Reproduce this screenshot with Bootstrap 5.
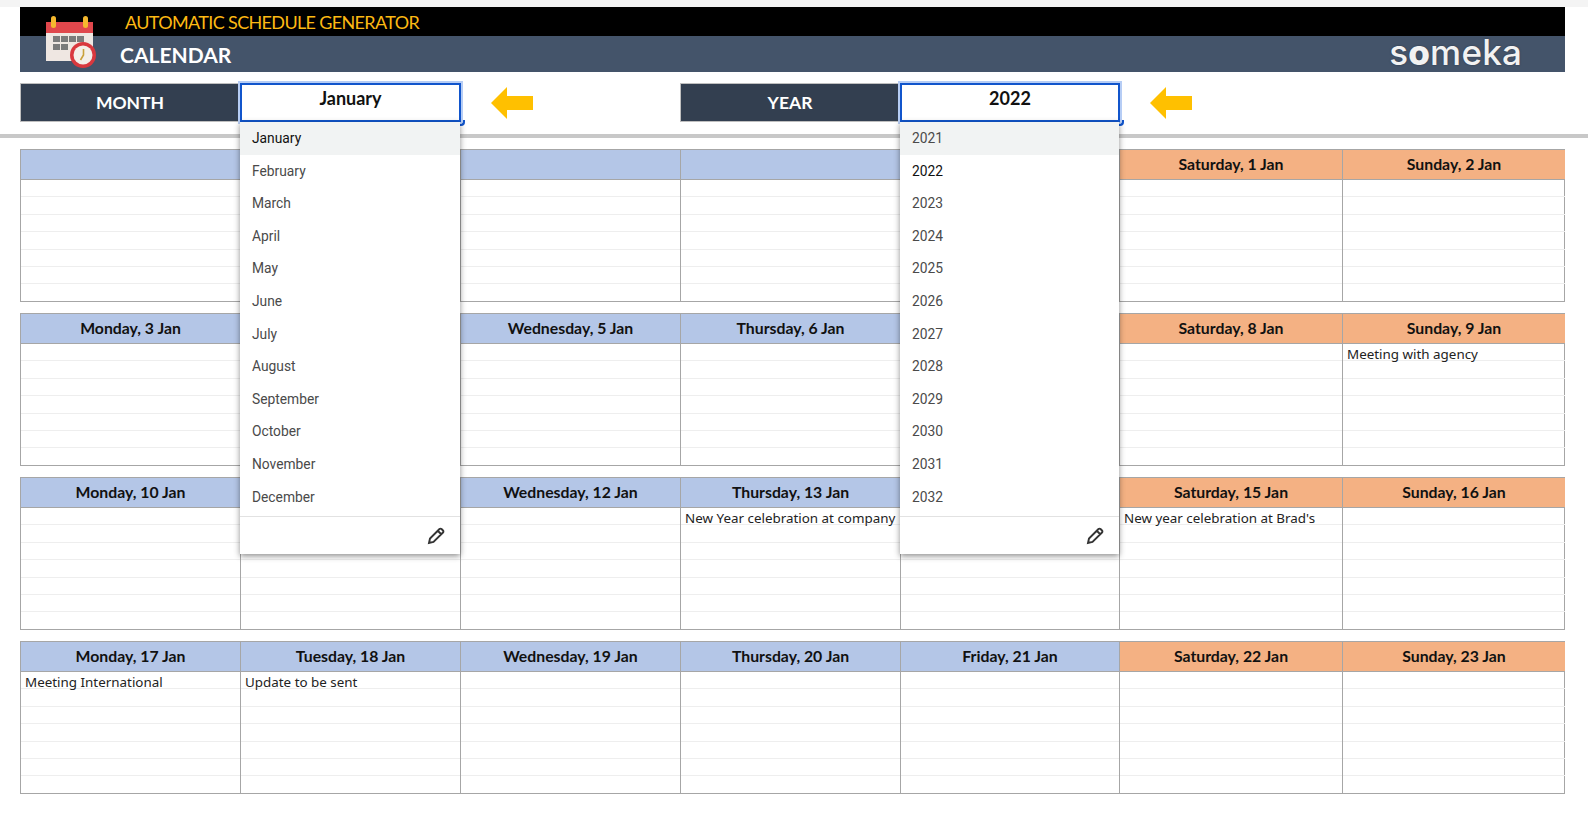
<!DOCTYPE html>
<html lang="en">

<head>
    <meta charset="UTF-8" />
    <title>Calendar</title>
    <link href="https://cdn.jsdelivr.net/npm/bootstrap@5.3.2/dist/css/bootstrap.min.css" rel="stylesheet" />
    <style>
        :root { --grid-cols: 220px 220px 220px 220px 219px 223px 222px; }
        html, body { height: 814px; overflow: hidden; background: #fff; font-family: "Lato", "Liberation Sans", sans-serif; }
        .top-strip { height: 7px; background: #f4f4f4; }
        .page-pad { padding: 0 23px 0 20px; }
        .title-bar { height: 29px; background: #000; padding-left: 105px; color: #fdb913; font-size: 18px; letter-spacing: -.65px; line-height: 31px; }
        .sub-bar { height: 36px; background: #44546a; padding: 0 43px 0 100px; color: #fff; }
        .sub-title { font-size: 21px; font-weight: 700; line-height: 38px; }
        .brand { font-family: "Inter", sans-serif; font-size: 35px; font-weight: 500; line-height: 33px; letter-spacing: .2px; color: #f2f2f2; text-shadow: 0 0 2px #2c3848; }
        .brand b { font-weight: 800; }
        .head-wrap { position: relative; }
        .app-icon { position: absolute; left: 25px; top: 8px; }
        .ctl-grid { display: grid; grid-template-columns: var(--grid-cols); grid-template-rows: 39px; margin-top: 11px; }
        .ctl-label { background: #333f50; color: #fff; font-size: 17.5px; font-weight: 700; line-height: 38px; text-align: center; border: 1px solid #bfbfbf; }
        .ctl-select { position: relative; z-index: 5; }
        .ctl-box { height: 39px; margin-right: -1px; background: #fff; border: 2px solid #1155cc; box-shadow: 0 0 0 2px #b6cdf5; font-size: 18px; font-weight: 700; color: #111; text-align: center; line-height: 27px; }
        .ctl-box::after { content: ""; position: absolute; right: -5px; bottom: -4px; width: 5px; height: 6px; border-right: 2px solid #1155cc; border-bottom: 2px solid #1155cc; border-bottom-right-radius: 4px; }
        .ctl-arrow { padding-left: 31px; padding-top: 4px; }
        .ctl-arrow svg { display: block; }
        .sched-menu.dropdown-menu { display: block; position: absolute; top: 39px; left: 0; width: 100%; min-width: 0; padding: 0; margin: 0; border: 0; border-radius: 0; background: #fff; box-shadow: 0 2px 6px rgba(0, 0, 0, .45); font-family: "Roboto", sans-serif; }
        .sched-menu .dropdown-item { height: 32.6px; padding: 0 12px; font-size: 13.8px; line-height: 32px; color: #4a4a4a; }
        .sched-menu .dropdown-item.hot { background: #f1f3f3; }
        .sched-menu .dropdown-item.cur { color: #111; }
        .menu-foot { height: 38px; margin-top: 3px; border-top: 1px solid #e2e2e2; padding: 10px 15px 0 0; text-align: right; line-height: 1; }
        .divider { height: 4px; margin-top: 12px; background: #c8c8c8; }
        .weeks { margin-top: 11px; }
        .week { display: grid; grid-template-columns: var(--grid-cols); height: 153px; margin-bottom: 11px; border: 1px solid #a6a6a6; }
        .day { border-right: 1px solid #a6a6a6; min-width: 0; }
        .day:last-child { border-right: 0; }
        .day-head { height: 30px; background: #b4c6e7; border-bottom: 1px solid #a6a6a6; color: #111; font-size: 15.8px; font-weight: 700; text-align: center; line-height: 28px; }
        .day.weekend .day-head { background: #f4b183; }
        .day-line { height: 17.4px; border-bottom: 1px solid #eeeeee; padding-left: 4px; font-family: "Noto Sans", sans-serif; font-size: 13.4px; line-height: 21px; color: #222; white-space: nowrap; }
        .day-line:last-child { border-bottom: 0; }
    </style>
</head>

<body>
    <div class="top-strip"></div>
    <div class="page-pad">
        <div class="head-wrap">
            <div class="title-bar">AUTOMATIC SCHEDULE GENERATOR</div>
            <div class="sub-bar d-flex justify-content-between">
                <div class="sub-title">CALENDAR</div>
                <div class="brand">s<b>o</b>meka</div>
            </div>
            <svg class="app-icon" width="54" height="54" viewBox="0 0 54 54">
                <rect x="1" y="7" width="47" height="39" fill="#efe7e2" />
                <rect x="1" y="7" width="47" height="11" fill="#e0474c" />
                <rect x="6" y="1" width="5" height="12" rx="2.5" fill="#f5b82e" />
                <rect x="38" y="1" width="5" height="12" rx="2.5" fill="#f5b82e" />
                <g fill="#7b7b7b">
                    <rect x="8" y="21" width="7" height="6" /><rect x="16" y="21" width="7" height="6" /><rect x="24" y="21" width="7" height="6" /><rect x="32" y="21" width="7" height="6" />
                    <rect x="8" y="29" width="7" height="6" /><rect x="16" y="29" width="7" height="6" />
                </g>
                <circle cx="38" cy="40" r="13" fill="#d9383e" />
                <circle cx="38" cy="40" r="9.500" fill="#f4efe9" />
                <path d="M38.500 34v6l-3 5" fill="none" stroke="#c9a13a" stroke-width="1.600" />
            </svg>
        </div>

        <div class="ctl-grid">
            <div class="ctl-label">MONTH</div>
            <div class="ctl-select">
                <div class="ctl-box">January</div>
                <div class="dropdown-menu sched-menu" id="menu-month"></div>
            </div>
            <div class="ctl-arrow"><svg width="42" height="32" viewBox="0 0 42 32"><path d="M0 16 16 0v9h26v14H16v9z" fill="#ffc000" /></svg></div>
            <div class="ctl-label">YEAR</div>
            <div class="ctl-select">
                <div class="ctl-box">2022</div>
                <div class="dropdown-menu sched-menu" id="menu-year"></div>
            </div>
            <div class="ctl-arrow"><svg width="42" height="32" viewBox="0 0 42 32"><path d="M0 16 16 0v9h26v14H16v9z" fill="#ffc000" /></svg></div>
        </div>
    </div>

    <div class="divider"></div>

    <div class="page-pad weeks" id="weeks"></div>

    <script src="https://cdn.jsdelivr.net/npm/bootstrap@5.3.2/dist/js/bootstrap.bundle.min.js"></script>
    <script>
        const MESES = ['January', 'February', 'March', 'April', 'May', 'June', 'July', 'August', 'September', 'October', 'November', 'December'];
        const ANIOS = [2021, 2022, 2023, 2024, 2025, 2026, 2027, 2028, 2029, 2030, 2031, 2032];
        const DIAS = ['Monday', 'Tuesday', 'Wednesday', 'Thursday', 'Friday', 'Saturday', 'Sunday'];
        const NOTAS = {
            9: 'Meeting with agency',
            13: 'New Year celebration at company',
            15: 'New year celebration at Brad\'s',
            17: 'Meeting International',
            18: 'Update to be sent'
        };
        // these headers sit under the open dropdowns
        const TAPADOS = [4, 7, 11, 14];
        const LAPIZ = `<svg width="18" height="18" viewBox="0 0 18 18"><path d="M2 16l1-4.500L12.500 2a1.400 1.400 0 0 1 2 0l1.500 1.500a1.400 1.400 0 0 1 0 2L6.500 15zM11 4l3 3" fill="none" stroke="#333" stroke-width="1.900" /></svg>`;

        function llenarMenu(id, items, cur) {
            let html = '';
            items.forEach((it, i) => {
                html += `<div class="dropdown-item${i === 0 ? ' hot' : ''}${it === cur ? ' cur' : ''}">${it}</div>`;
            });
            html += `<div class="menu-foot">${LAPIZ}</div>`;
            document.getElementById(id).innerHTML = html;
        }
        llenarMenu('menu-month', MESES, 'January');
        llenarMenu('menu-year', ANIOS, 2022);

        let html = '';
        for (let w = 0; w < 4; w++) {
            html += '<div class="week">';
            for (let d = 0; d < 7; d++) {
                const num = w * 7 + d - 4;
                const titulo = num >= 1 && !TAPADOS.includes(num) ? `${DIAS[d]}, ${num} Jan` : '';
                let lineas = '';
                for (let l = 0; l < 7; l++) {
                    lineas += `<div class="day-line">${l === 0 && NOTAS[num] ? NOTAS[num] : ''}</div>`;
                }
                html += `<div class="day${d > 4 ? ' weekend' : ''}"><div class="day-head">${titulo}</div>${lineas}</div>`;
            }
            html += '</div>';
        }
        document.getElementById('weeks').innerHTML = html;
    </script>
</body>

</html>
